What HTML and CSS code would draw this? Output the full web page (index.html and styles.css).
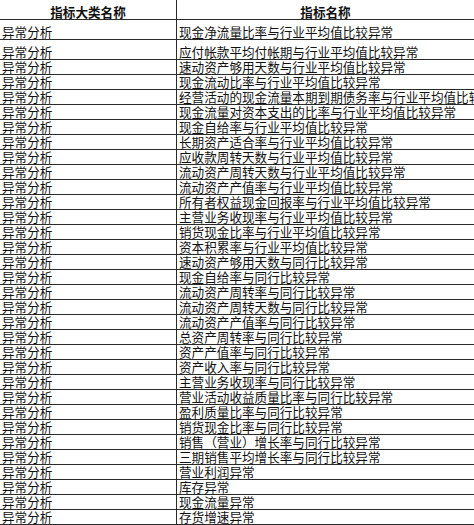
FILE: index.html
```html
<!DOCTYPE html>
<html lang="zh-CN">
<head>
<meta charset="utf-8">
<title>指标</title>
<link rel="stylesheet" href="styles.css">
</head>
<body>
<div class="sheet">
  <div class="cell head left">指标大类名称</div><div class="cell head right">指标名称</div>
  <div class="cell tall left">异常分析</div><div class="cell tall right">现金净流量比率与行业平均值比较异常</div>
  <div class="cell tall left">异常分析</div><div class="cell tall right">应付帐款平均付帐期与行业平均值比较异常</div>
  <div class="cell left">异常分析</div><div class="cell right">速动资产够用天数与行业平均值比较异常</div>
  <div class="cell left">异常分析</div><div class="cell right">现金流动比率与行业平均值比较异常</div>
  <div class="cell left">异常分析</div><div class="cell right">经营活动的现金流量本期到期债务率与行业平均值比较异常</div>
  <div class="cell left">异常分析</div><div class="cell right">现金流量对资本支出的比率与行业平均值比较异常</div>
  <div class="cell left">异常分析</div><div class="cell right">现金自给率与行业平均值比较异常</div>
  <div class="cell left">异常分析</div><div class="cell right">长期资产适合率与行业平均值比较异常</div>
  <div class="cell left">异常分析</div><div class="cell right">应收款周转天数与行业平均值比较异常</div>
  <div class="cell left">异常分析</div><div class="cell right">流动资产周转天数与行业平均值比较异常</div>
  <div class="cell left">异常分析</div><div class="cell right">流动资产产值率与行业平均值比较异常</div>
  <div class="cell left">异常分析</div><div class="cell right">所有者权益现金回报率与行业平均值比较异常</div>
  <div class="cell left">异常分析</div><div class="cell right">主营业务收现率与行业平均值比较异常</div>
  <div class="cell left">异常分析</div><div class="cell right">销货现金比率与行业平均值比较异常</div>
  <div class="cell left">异常分析</div><div class="cell right">资本积累率与行业平均值比较异常</div>
  <div class="cell left">异常分析</div><div class="cell right">速动资产够用天数与同行比较异常</div>
  <div class="cell left">异常分析</div><div class="cell right">现金自给率与同行比较异常</div>
  <div class="cell left">异常分析</div><div class="cell right">流动资产周转率与同行比较异常</div>
  <div class="cell left">异常分析</div><div class="cell right">流动资产周转天数与同行比较异常</div>
  <div class="cell left">异常分析</div><div class="cell right">流动资产产值率与同行比较异常</div>
  <div class="cell left">异常分析</div><div class="cell right">总资产周转率与同行比较异常</div>
  <div class="cell left">异常分析</div><div class="cell right">资产产值率与同行比较异常</div>
  <div class="cell left">异常分析</div><div class="cell right">资产收入率与同行比较异常</div>
  <div class="cell left">异常分析</div><div class="cell right">主营业务收现率与同行比较异常</div>
  <div class="cell left">异常分析</div><div class="cell right">营业活动收益质量比率与同行比较异常</div>
  <div class="cell left">异常分析</div><div class="cell right">盈利质量比率与同行比较异常</div>
  <div class="cell left">异常分析</div><div class="cell right">销货现金比率与同行比较异常</div>
  <div class="cell left">异常分析</div><div class="cell right">销售（营业）增长率与同行比较异常</div>
  <div class="cell left">异常分析</div><div class="cell right">三期销售平均增长率与同行比较异常</div>
  <div class="cell left">异常分析</div><div class="cell right">营业利润异常</div>
  <div class="cell left">异常分析</div><div class="cell right">库存异常</div>
  <div class="cell left">异常分析</div><div class="cell right">现金流量异常</div>
  <div class="cell left">异常分析</div><div class="cell right">存货增速异常</div>
</div>
</body>
</html>
```

FILE: styles.css
```css
html, body {
  margin: 0;
  padding: 0;
  background: #ffffff;
}
body {
  width: 474px;
  height: 525px;
  overflow: hidden;
  font-family: "Noto Sans CJK SC", "Noto Sans", sans-serif;
  color: #111;
}
.sheet {
  display: grid;
  grid-template-columns: 177px 297px;
}
.cell {
  box-sizing: border-box;
  height: 15px;
  border-bottom: 1px solid #2a2a2a;
  font-size: 12.6px;
  line-height: 14px;
  white-space: nowrap;
  overflow-x: clip;
  overflow-y: visible;
  display: flex;
  align-items: flex-end;
  padding-left: 2px;
}
.cell.tall {
  height: 20px;
}
.cell.left {
  border-right: 1px solid #2a2a2a;
}
.cell.head {
  height: 20px;
  font-weight: bold;
  justify-content: center;
  padding-left: 0;
}
```
